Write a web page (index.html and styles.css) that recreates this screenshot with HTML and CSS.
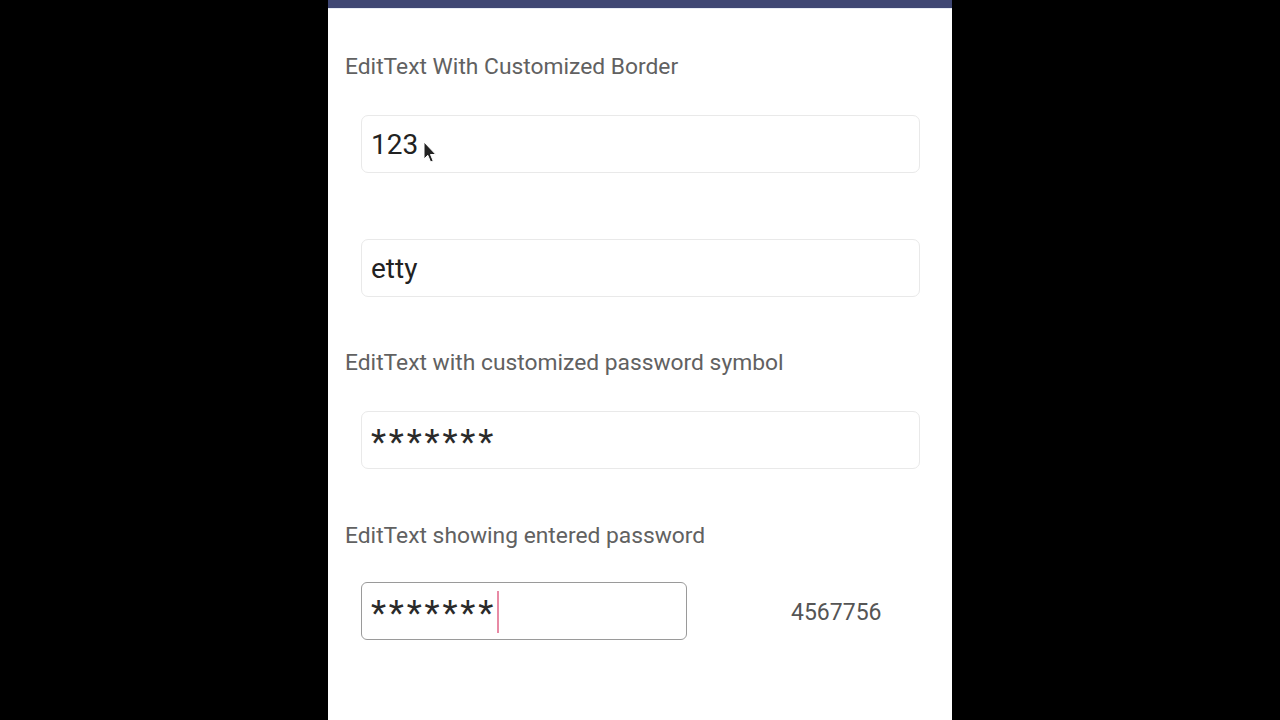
FILE: index.html
```html
<!DOCTYPE html>
<html>
<head>
<meta charset="utf-8">
<link rel="stylesheet" href="styles.css">
</head>
<body>
<div class="phone">
  <div class="topbar"></div>
  <div class="content">
    <div class="label l1">EditText With Customized Border</div>
    <div class="field f1"><span class="val">123</span>
      <svg class="pointer" width="15" height="23" viewBox="0 0 15 23"><path d="M1 1 L1 18 L4.8 14.3 L7.6 21 L10.2 19.9 L7.5 13.5 L12.8 13.5 Z" fill="#222" stroke="#fff" stroke-width="1"/></svg>
    </div>
    <div class="field f2"><span class="val">etty</span></div>
    <div class="label l2">EditText with customized password symbol</div>
    <div class="field f3"><span class="val stars">*******</span></div>
    <div class="label l3">EditText showing entered password</div>
    <div class="row">
      <div class="field pwd"><span class="val stars">*******</span><span class="caret"></span></div>
      <div class="shown">4567756</div>
    </div>
  </div>
</div>
</body>
</html>
```

FILE: styles.css
```css
html, body {
  margin: 0;
  padding: 0;
  background: #000;
  height: 720px;
  overflow: hidden;
}
.phone {
  width: 624px;
  height: 720px;
  margin: 0 auto;
  background: #fff;
  font-family: Roboto, "Noto Sans", sans-serif;
}
.topbar {
  height: 8px;
  background: #3f4774;
  border-bottom: 1px solid #e6ecf6;
}
.content {
  padding: 0 32px 0 16px;
}
.label {
  font-size: 22.8px;
  line-height: 24px;
  color: #616161;
  padding-left: 1px;
}
.l1 { margin-top: 46px; }
.l2 { margin-top: 54px; }
.l3 { margin-top: 55px; }
.field {
  position: relative;
  height: 56px;
  margin-left: 17px;
  border: 1px solid #e9e9e9;
  border-radius: 7px;
  display: flex;
  align-items: center;
  padding-left: 9px;
  box-sizing: content-box;
}
.f1 { margin-top: 36px; }
.f2 { margin-top: 66px; }
.f3 { margin-top: 36px; }
.val {
  font-size: 28px;
  color: #222;
  line-height: 32px;
  margin-top: 2px;
}
.stars {
  font-family: Roboto, sans-serif;
  font-size: 35px;
  letter-spacing: 2.8px;
  margin-top: 6px;
  color: #2a2a2a;
}
.pointer {
  position: absolute;
  left: 61px;
  top: 25px;
}
.row {
  display: flex;
  align-items: center;
  margin-top: 34px;
}
.pwd {
  width: 315px;
  border-color: #9a9a9a;
  border-radius: 6px;
}
.caret {
  width: 2px;
  height: 42px;
  background: #e88aa5;
  margin-left: 1px;
  margin-top: 2px;
}
.shown {
  margin-left: 104px;
  font-size: 23px;
  color: #555;
  margin-top: 2px;
}
```
